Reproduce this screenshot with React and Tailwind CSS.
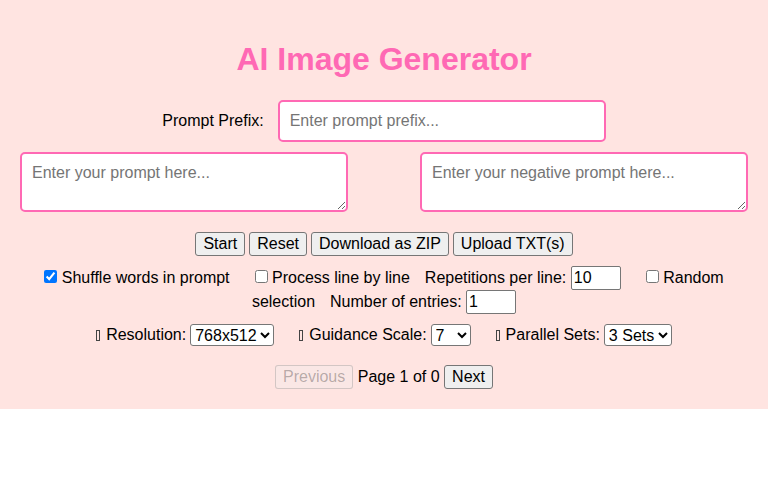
import React from "react";

const btn =
  "px-[7px] py-[2px] border border-[#767676] rounded-[3px] bg-[#efefef] text-black leading-[normal]";
const sel =
  "h-[22px] border border-[#767676] rounded-[3px] bg-white text-black leading-[normal] appearance-auto";

function Tofu() {
  return (
    <span className="inline-block w-[4px] h-[11px] border border-[#444] mr-[6px]" />
  );
}

export default function App() {
  return (
    <div
      className="min-h-[480px] bg-white text-black text-[16px] leading-[normal]"
      style={{ fontFamily: '"Liberation Sans", Arial, sans-serif' }}
    >
      <div className="bg-[#ffe4e1] p-[20px]">
        <h1 className="mt-[21px] mb-[22px] text-center text-[32px] font-bold leading-[37px] text-[#ff69b4]">
          AI Image Generator
        </h1>

        <div className="flex items-center justify-center">
          <label className="mr-[14px]">Prompt Prefix:</label>
          <input
            type="text"
            placeholder="Enter prompt prefix..."
            className="w-[328px] h-[42px] px-[10px] bg-white border-2 border-[#ff69b4] rounded-[5px] placeholder:text-[#757575] outline-none"
          />
        </div>

        <div className="mt-[10px] flex justify-between">
          <textarea
            placeholder="Enter your prompt here..."
            className="w-[328px] h-[60px] p-[10px] bg-white border-2 border-[#ff69b4] rounded-[5px] placeholder:text-[#757575] outline-none resize-y leading-[normal]"
          />
          <textarea
            placeholder="Enter your negative prompt here..."
            className="w-[328px] h-[60px] p-[10px] bg-white border-2 border-[#ff69b4] rounded-[5px] placeholder:text-[#757575] outline-none resize-y leading-[normal]"
          />
        </div>

        <div className="mt-[20px] flex justify-center gap-[4px]">
          <button className={btn}>Start</button>
          <button className={btn}>Reset</button>
          <button className={btn}>Download as ZIP</button>
          <button className={btn}>Upload TXT(s)</button>
        </div>

        <div className="mt-[10px] text-center leading-[24px]">
          <label>
            <input type="checkbox" defaultChecked className="w-[13px] h-[13px]" /> Shuffle words in prompt
          </label>
          <label>
            <input type="checkbox" className="w-[13px] h-[13px] ml-[25px]" /> Process line by line
          </label>
          <label className="ml-[15px]">
            Repetitions per line:{" "}
            <input
              type="text"
              defaultValue="10"
              className="w-[50px] h-[24px] px-[2px] align-top bg-white border border-[#767676] rounded-[2px] leading-[normal] outline-none"
            />
          </label>
          <label>
            <input type="checkbox" className="w-[13px] h-[13px] ml-[25px]" /> Random selection
          </label>
          <label className="ml-[15px]">
            Number of entries:{" "}
            <input
              type="text"
              defaultValue="1"
              className="w-[50px] h-[24px] px-[2px] align-top bg-white border border-[#767676] rounded-[2px] leading-[normal] outline-none"
            />
          </label>
        </div>

        <div className="mt-[10px] flex items-center justify-center gap-[25px]">
          <div className="flex items-center">
            <Tofu />
            <span className="mr-[4px]">Resolution:</span>
            <select className={sel + " w-[84px]"} defaultValue="768x512">
              <option>768x512</option>
              <option>512x512</option>
              <option>512x768</option>
            </select>
          </div>
          <div className="flex items-center">
            <Tofu />
            <span className="mr-[4px]">Guidance Scale:</span>
            <select className={sel + " w-[40px]"} defaultValue="7">
              <option>5</option>
              <option>6</option>
              <option>7</option>
              <option>8</option>
            </select>
          </div>
          <div className="flex items-center">
            <Tofu />
            <span className="mr-[4px]">Parallel Sets:</span>
            <select className={sel + " w-[68px]"} defaultValue="3 Sets">
              <option>1 Set</option>
              <option>2 Sets</option>
              <option>3 Sets</option>
            </select>
          </div>
        </div>

        <div className="mt-[19px] flex items-center justify-center gap-[4.5px]">
          <button
            disabled
            className="px-[7px] py-[2px] border border-[rgba(118,118,118,0.3)] rounded-[3px] bg-[rgba(239,239,239,0.3)] text-[rgba(16,16,16,0.3)] leading-[normal]"
          >
            Previous
          </button>
          <span>Page 1 of 0</span>
          <button className={btn}>Next</button>
        </div>
      </div>
    </div>
  );
}
